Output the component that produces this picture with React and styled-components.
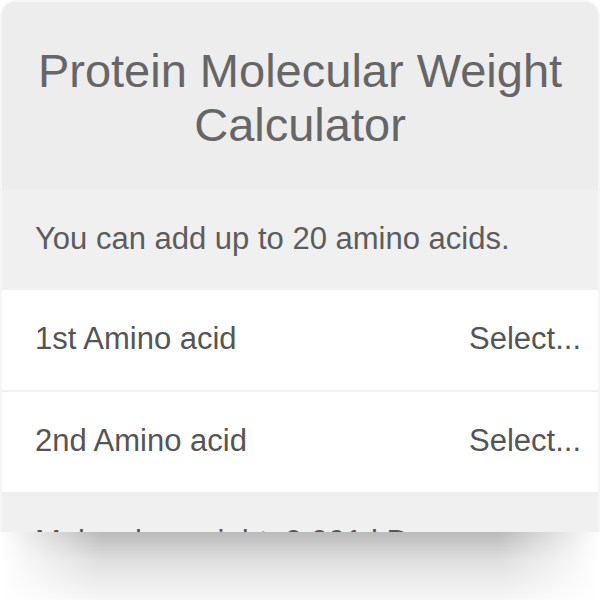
import React from 'react';
import styled, { createGlobalStyle } from 'styled-components';

const GlobalStyle = createGlobalStyle`
  html, body {
    margin: 0;
    padding: 0;
    background: #ffffff;
  }
  body {
    font-family: "Liberation Sans", Arial, sans-serif;
  }
`;

const rows = [
  { label: '1st Amino acid', value: 'Select...' },
  { label: '2nd Amino acid', value: 'Select...' },
];

const App = () => {
  return (
    <Page>
      <GlobalStyle />
      <Card>
        <Header>
          <Title>Protein Molecular Weight Calculator</Title>
        </Header>
        <Info>You can add up to 20 amino acids.</Info>
        {rows.map((row, index) => (
          <Row key={index} divided={index > 0}>
            <Label>{row.label}</Label>
            <Value>{row.value}</Value>
          </Row>
        ))}
        <Result>Molecular weight: 0.001 kDa</Result>
      </Card>
      <Shade />
    </Page>
  );
};

export default App;

const Page = styled.div`
  width: 600px;
  height: 600px;
  overflow: hidden;
`;

const Card = styled.div`
  height: 532px;
  overflow: hidden;
  box-sizing: border-box;
  border: 2px solid #f6f6f6;
  border-bottom: none;
  border-radius: 16px 16px 0 0;
  background: #ededed;
`;

const Header = styled.div`
  height: 188px;
  box-sizing: border-box;
  padding: 42px 20px 0;
  background: #ededed;
`;

const Title = styled.h1`
  margin: 0;
  font-weight: normal;
  font-size: 47px;
  line-height: 54px;
  color: #666666;
  text-align: center;
`;

const Info = styled.div`
  height: 98px;
  padding-bottom: 2px;
  display: flex;
  align-items: center;
  padding-left: 33px;
  background: #f0f0f0;
  font-size: 31px;
  color: #5c5c5c;
`;

const Row = styled.div`
  height: 98px;
  padding: 0 17px 2px 33px;
  display: flex;
  align-items: center;
  justify-content: space-between;
  background: #ffffff;
  border-top: ${(p) => (p.divided ? '2px solid #f0f0f0' : 'none')};
  font-size: 31px;
  color: #555555;
`;

const Label = styled.span``;

const Value = styled.span``;

const Result = styled.div`
  padding: 32px 33px 0;
  height: 120px;
  background: #f0f0f0;
  font-size: 31px;
  color: #555555;
`;

const Shade = styled.div`
  height: 68px;
  background: linear-gradient(
    to bottom,
    rgba(0, 0, 0, 0.27),
    rgba(0, 0, 0, 0.13) 40%,
    rgba(0, 0, 0, 0.03)
  );
  -webkit-mask-image: linear-gradient(to right, transparent, #000 100px, #000 500px, transparent);
  mask-image: linear-gradient(to right, transparent, #000 100px, #000 500px, transparent);
`;
